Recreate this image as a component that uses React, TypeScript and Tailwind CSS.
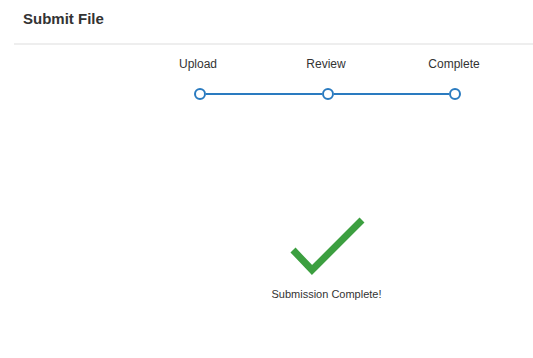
export default function App() {
  const steps = ["Upload", "Review", "Complete"];

  return (
    <div className="w-[533px] h-[358px] bg-white text-[#333] font-['Liberation_Sans',Arial,sans-serif]">
      <div className="pl-[14px]">
        <h1 className="pl-[9px] pt-[9px] h-[43px] text-[15px] font-bold leading-[19px]">
          Submit File
        </h1>
        <div className="h-[2px] bg-[#eeeeee]" />
      </div>

      <div className="ml-[134px] w-[384px] pt-[12px]">
        <div className="grid grid-cols-3 text-[12px] leading-[15px]">
          {steps.map((s) => (
            <div key={s} className="text-center">
              {s}
            </div>
          ))}
        </div>
        <div className="flex items-center ml-[60px] mr-[57px] mt-[16px]">
          <span className="w-[12px] h-[12px] rounded-full border-2 border-[#2a7bc0] bg-white shrink-0" />
          <span className="flex-1 h-[2px] bg-[#2a7bc0]" />
          <span className="w-[12px] h-[12px] rounded-full border-2 border-[#2a7bc0] bg-white shrink-0" />
          <span className="flex-1 h-[2px] bg-[#2a7bc0]" />
          <span className="w-[12px] h-[12px] rounded-full border-2 border-[#2a7bc0] bg-white shrink-0" />
        </div>
      </div>

      <div className="flex flex-col items-center mt-[115px] ml-[120px]">
        <svg width="80" height="62" viewBox="0 0 80 62" className="block">
          <path
            d="M6 35 L25 55 L75 5"
            fill="none"
            stroke="#3c9f40"
            strokeWidth="7"
          />
        </svg>
        <p className="mt-[10px] text-[11px] leading-[14px]">Submission Complete!</p>
      </div>
    </div>
  );
}
